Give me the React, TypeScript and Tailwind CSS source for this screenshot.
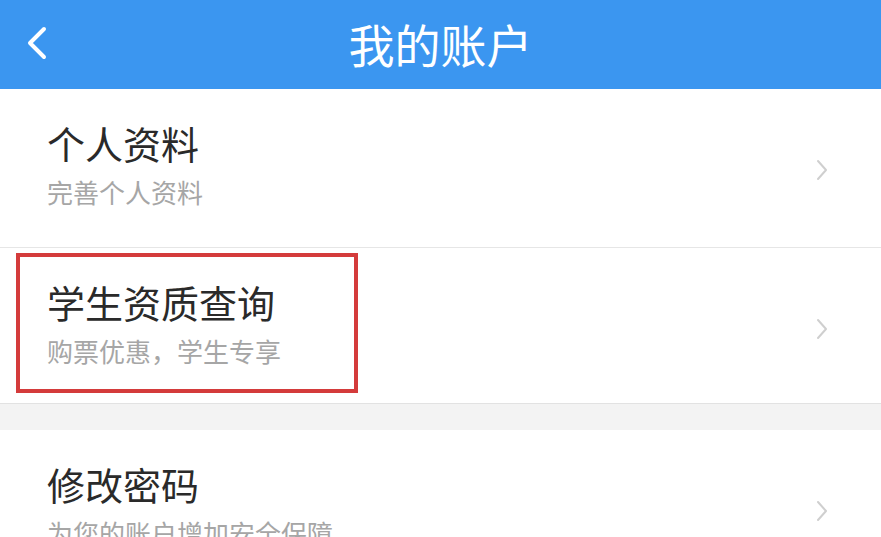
import React from "react";

const Chevron = () => (
  <svg width="14" height="24" viewBox="0 0 14 24" fill="none" className="shrink-0">
    <polyline points="3,3 11,12 3,21" stroke="#cfcfcf" strokeWidth="2" strokeLinecap="round" strokeLinejoin="round" />
  </svg>
);

const Row = ({ title, sub, highlight, h }: { title: string; sub: string; highlight?: boolean; h: string }) => (
  <div className={`relative flex items-start justify-between bg-white ${h}`}>
    <div className="pl-[47px] pt-[31px]">
      <div className="text-[38px] leading-[46px] text-[#2a2a2a]">{title}</div>
      <div className="mt-[10px] text-[26px] leading-[31px] text-[#a6a6a6]">{sub}</div>
    </div>
    <div className="pr-[52px] pt-[69px]">
      <Chevron />
    </div>
    {highlight && (
      <div className="absolute left-[16px] top-[5px] h-[140px] w-[342px] border-4 border-[#d43b3b]" />
    )}
  </div>
);

export default function App() {
  return (
    <div
      className="h-[537px] w-[881px] overflow-hidden bg-white"
      style={{ fontFamily: '"Noto Sans CJK SC", "Noto Sans", sans-serif' }}
    >
      <div className="relative flex h-[89px] items-center justify-center bg-[#3b96f0]">
        <svg className="absolute left-[24px] top-[26px]" width="26" height="34" viewBox="0 0 26 34" fill="none">
          <polyline points="20,3 6,17 20,31" stroke="#ffffff" strokeWidth="4" strokeLinecap="round" strokeLinejoin="round" />
        </svg>
        <div className="-mt-[3px] text-[46px] leading-none text-white">我的账户</div>
      </div>
      <Row title="个人资料" sub="完善个人资料" h="h-[158px]" />
      <div className="h-px bg-[#e6e6e6]" />
      <Row title="学生资质查询" sub="购票优惠，学生专享" highlight h="h-[155px]" />
      <div className="h-px bg-[#e2e2e2]" />
      <div className="h-[26px] bg-[#f3f3f3]" />
      <Row title="修改密码" sub="为您的账户增加安全保障" h="h-[158px]" />
    </div>
  );
}
